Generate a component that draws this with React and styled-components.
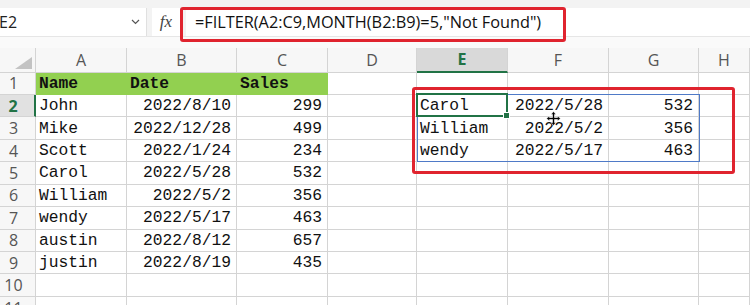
import React from "react";
import styled, { createGlobalStyle } from "styled-components";

const GlobalStyle = createGlobalStyle`
  html, body {
    margin: 0;
    padding: 0;
    background: #fff;
    overflow: hidden;
  }
  body {
    font-family: "Open Sans", "Noto Sans", sans-serif;
  }
`;

const cols = ["A", "B", "C", "D", "E", "F", "G", "H"];

const rows = [
  ["Name", "Date", "Sales"],
  ["John", "2022/8/10", "299"],
  ["Mike", "2022/12/28", "499"],
  ["Scott", "2022/1/24", "234"],
  ["Carol", "2022/5/28", "532"],
  ["William", "2022/5/2", "356"],
  ["wendy", "2022/5/17", "463"],
  ["austin", "2022/8/12", "657"],
  ["justin", "2022/8/19", "435"],
];

const result = [
  ["Carol", "2022/5/28", "532"],
  ["William", "2022/5/2", "356"],
  ["wendy", "2022/5/17", "463"],
];

const GRID = "36px 91px 110px 91px 89px 91px 101px 90px 1fr";
const ROW_H = 22.45;

const Page = styled.div`
  width: 750px;
  height: 305px;
  overflow: hidden;
  position: relative;
  background: #fff;
`;

const FormulaBar = styled.div`
  display: flex;
  align-items: stretch;
  height: 28px;
  padding: 8px 0 0 0;
  border-top: 3px solid #e3e3e3;
  margin-top: -3px;
  background: #f3f3f3;
  gap: 5px;
`;

const NameBox = styled.div`
  width: 148px;
  background: #fff;
  display: flex;
  align-items: center;
  justify-content: space-between;
  font-size: 16px;
  color: #222;
  padding: 0 6px 0 0;
  box-sizing: border-box;
  margin-left: -1px;
  border-right: 1px solid #e0e0e0;
`;

const Chevron = styled.svg`
  width: 9px;
  height: 6px;
`;

const FxBox = styled.div`
  width: 28px;
  background: #fff;
  display: flex;
  align-items: center;
  justify-content: center;
  font-family: "Liberation Serif", serif;
  font-style: italic;
  font-size: 17px;
  color: #444;
`;

const FormulaInput = styled.div`
  flex: 1;
  position: relative;
  background: #fff;
  display: flex;
  align-items: center;
  padding-left: 9px;
  font-size: 16.3px;
  color: #111;
  margin-left: 1px;
  white-space: nowrap;
`;

const RedMark = styled.div`
  position: absolute;
  left: ${(p) => p.$left}px;
  top: ${(p) => p.$top}px;
  width: ${(p) => p.$w}px;
  height: ${(p) => p.$h}px;
  border: 3px solid #e0242f;
  border-radius: 3px;
  box-sizing: border-box;
  pointer-events: none;
`;

const Gap = styled.div`
  height: 11px;
  background: #fafafa;
  border-top: 1px solid #e6e6e6;
`;

const Sheet = styled.div`
  position: relative;
  display: grid;
  grid-template-columns: ${GRID};
  grid-template-rows: 24.5px;
  grid-auto-rows: ${ROW_H}px;
`;

const ColHead = styled.div`
  background: ${(p) => (p.$active ? "#d9d9d9" : "#f7f7f7")};
  color: ${(p) => (p.$active ? "#217346" : "#555")};
  font-weight: ${(p) => (p.$active ? 700 : 400)};
  font-size: 16px;
  display: flex;
  align-items: center;
  justify-content: center;
  box-sizing: border-box;
  border-right: 1px solid #d4d4d4;
  border-bottom: ${(p) => (p.$active ? "2px solid #217346" : "1px solid #d4d4d4")};
`;

const Corner = styled.div`
  background: #f7f7f7;
  border-right: 1px solid #d4d4d4;
  border-bottom: 1px solid #d4d4d4;
  box-sizing: border-box;
  display: flex;
  align-items: flex-end;
  justify-content: flex-end;
  padding: 0 3px 3px 0;
`;

const RowHead = styled.div`
  background: ${(p) => (p.$active ? "#e1e1e1" : "#f7f7f7")};
  color: ${(p) => (p.$active ? "#217346" : "#555")};
  font-weight: ${(p) => (p.$active ? 700 : 400)};
  font-size: 16px;
  display: flex;
  align-items: center;
  justify-content: center;
  padding-right: 8px;
  box-sizing: border-box;
  border-right: ${(p) => (p.$active ? "2px solid #217346" : "1px solid #d4d4d4")};
  border-bottom: 1px solid #d4d4d4;
`;

const Cell = styled.div`
  font-family: "Liberation Mono", "DejaVu Sans Mono", monospace;
  font-size: 16.3px;
  font-weight: ${(p) => (p.$bold ? 700 : 400)};
  color: #111;
  background: ${(p) => (p.$fill ? "#92d050" : "#fff")};
  display: flex;
  align-items: center;
  justify-content: ${(p) => (p.$right ? "flex-end" : "flex-start")};
  padding: ${(p) => (p.$right ? "0 5px 0 0" : "0 0 0 3px")};
  box-sizing: border-box;
  white-space: nowrap;
  overflow: hidden;
  border-right: 1px solid ${(p) => (p.$fill ? "#92d050" : "#d4d4d4")};
  border-bottom: 1px solid ${(p) => (p.$fill ? "#92d050" : "#d4d4d4")};
`;

const SpillBox = styled.div`
  position: absolute;
  left: 417px;
  top: ${24.5 + ROW_H - 1}px;
  width: 283px;
  height: ${ROW_H * 3 + 1}px;
  border: 1px solid #4f7ac7;
  box-sizing: border-box;
  pointer-events: none;
`;

const Selection = styled.div`
  position: absolute;
  left: 416px;
  top: ${24.5 + ROW_H - 1.5}px;
  width: 92px;
  height: ${ROW_H + 1.5}px;
  border: 2px solid #217346;
  box-sizing: border-box;
  pointer-events: none;

  &::after {
    content: "";
    position: absolute;
    right: -4px;
    bottom: -4px;
    width: 5px;
    height: 5px;
    background: #217346;
    border: 1px solid #fff;
  }
`;

const Cursor = styled.svg`
  position: absolute;
  left: 546px;
  top: ${24.5 + ROW_H * 2 - 6}px;
  width: 15px;
  height: 15px;
  pointer-events: none;
`;

export default function App() {
  return (
    <Page>
      <GlobalStyle />
      <FormulaBar>
        <NameBox>
          <span>E2</span>
          <Chevron viewBox="0 0 9 6">
            <path d="M1 1 L4.5 4.5 L8 1" fill="none" stroke="#555" strokeWidth="1.2" />
          </Chevron>
        </NameBox>
        <FxBox>fx</FxBox>
        <FormulaInput>
          =FILTER(A2:C9,MONTH(B2:B9)=5,"Not Found")
          <RedMark $left={-6} $top={-1} $w={386} $h={35} />
        </FormulaInput>
      </FormulaBar>
      <Gap />
      <Sheet>
        <Corner>
          <svg width="17" height="12" viewBox="0 0 17 12">
            <polygon points="17,0 17,12 0,12" fill="#c3c3c3" />
          </svg>
        </Corner>
        {cols.map((c) => (
          <ColHead key={c} $active={c === "E"}>
            {c}
          </ColHead>
        ))}
        {Array.from({ length: 11 }).map((_, r) => {
          const data = rows[r] || [];
          const res = r >= 1 && r <= 3 ? result[r - 1] : [];
          const header = r === 0;
          return (
            <React.Fragment key={r}>
              <RowHead $active={r === 1}>{r + 1}</RowHead>
              <Cell $fill={header} $bold={header}>{data[0]}</Cell>
              <Cell $fill={header} $bold={header} $right={!header}>{data[1]}</Cell>
              <Cell $fill={header} $bold={header} $right={!header}>{data[2]}</Cell>
              <Cell />
              <Cell>{res[0]}</Cell>
              <Cell $right>{res[1]}</Cell>
              <Cell $right>{res[2]}</Cell>
              <Cell />
            </React.Fragment>
          );
        })}
        <SpillBox />
        <Selection />
        <RedMark $left={412} $top={24.5 + ROW_H - 8} $w={323} $h={87} />
        <Cursor viewBox="0 0 15 15">
          <path
            d="M7.5 0.5 L10 3.5 L8.5 3.5 L8.5 6.5 L11.5 6.5 L11.5 5 L14.5 7.5 L11.5 10 L11.5 8.5 L8.5 8.5 L8.5 11.5 L10 11.5 L7.5 14.5 L5 11.5 L6.5 11.5 L6.5 8.5 L3.5 8.5 L3.5 10 L0.5 7.5 L3.5 5 L3.5 6.5 L6.5 6.5 L6.5 3.5 L5 3.5 Z"
            fill="#000"
            stroke="#fff"
            strokeWidth="0.6"
          />
        </Cursor>
      </Sheet>
    </Page>
  );
}
